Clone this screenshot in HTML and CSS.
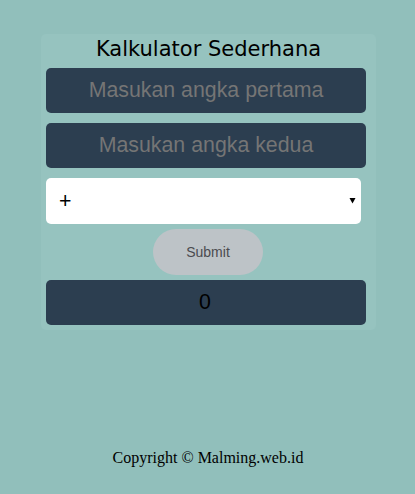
FILE: index.html
```html
<!DOCTYPE html>
<html lang="id">
<head>
<meta charset="utf-8">
<title>Kalkulator Sederhana</title>
<link rel="stylesheet" href="styles.css">
</head>
<body>
<main class="card">
  <h1 class="title">Kalkulator Sederhana</h1>
  <form class="form">
    <input class="field" type="text" placeholder="Masukan angka pertama">
    <input class="field" type="text" placeholder="Masukan angka kedua">
    <div class="select-wrap">
      <select class="select"><option>+</option><option>-</option><option>*</option><option>/</option></select>
      <svg class="arrow" width="7" height="7" viewBox="0 0 7 7" aria-hidden="true"><path d="M0.5 1H6.5L3.5 6.5Z" fill="#000"/></svg>
    </div>
    <button class="submit" type="button">Submit</button>
    <output class="result">0</output>
  </form>
</main>
<footer class="copy">Copyright © Malming.web.id</footer>
</body>
</html>
```
FILE: styles.css
```css
* { box-sizing: border-box; }
html, body { height: 100%; }
body {
  margin: 0;
  padding-top: 34px;
  background: #91bfbb;
  font-family: "Liberation Sans", Arial, sans-serif;
}
.card {
  width: 335px;
  height: 296px;
  margin-left: 41px;
  padding: 0 5px;
  background: #96c3bf;
  border-radius: 5px;
}
.title {
  margin: 0;
  height: 34px;
  font-family: "DejaVu Sans", sans-serif;
  font-weight: 400;
  font-size: 21px;
  line-height: 30px;
  text-align: center;
  color: #000;
}
.form { display: flex; flex-direction: column; align-items: flex-start; }
.field {
  width: 320px;
  height: 45px;
  margin-bottom: 10px;
  border: 0;
  border-radius: 5px;
  background: #2c3e50;
  font: 21.33px "Liberation Sans", Arial, sans-serif;
  text-align: center;
  color: #fff;
}
.field::placeholder { color: #757575; opacity: 1; }
.select-wrap { position: relative; width: 315px; height: 46px; }
.select {
  display: block;
  width: 100%;
  height: 100%;
  padding: 0 13px;
  border: 0;
  border-radius: 5px;
  appearance: none;
  background-color: #fff;
  font: 21.33px "Liberation Sans", Arial, sans-serif;
  color: #000;
}
.arrow { position: absolute; right: 5px; top: 19px; }
.submit {
  width: 110px;
  height: 46px;
  margin: 5px 0 5px 107px;
  padding: 0;
  border: 0;
  border-radius: 23px;
  background: #bdc3c7;
  font: 14px "Liberation Sans", Arial, sans-serif;
  color: #4b4b4f;
}
.result {
  display: block;
  width: 320px;
  height: 45px;
  padding-right: 2px;
  border-radius: 5px;
  background: #2c3e50;
  font-size: 21.33px;
  line-height: 45px;
  text-align: center;
  color: #000;
}
.copy {
  margin-top: 119px;
  padding-left: 1px;
  font-family: "Liberation Serif", "Times New Roman", serif;
  font-size: 16px;
  line-height: 18px;
  text-align: center;
  color: #000;
}
```
